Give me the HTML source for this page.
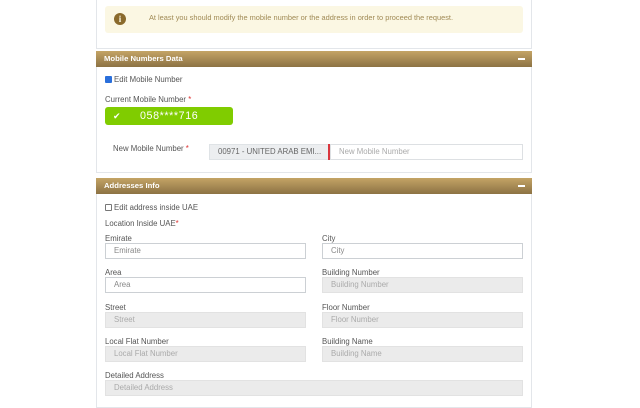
<!DOCTYPE html>
<html><head><style>
*{box-sizing:border-box;margin:0;padding:0}
body{width:640px;height:400px;background:#fff;font-family:"Liberation Sans","DejaVu Sans",sans-serif;position:relative;overflow:hidden;color:#555}
.a{position:absolute}
.card{border:1px solid #e3e6ea;background:#fff}
.hdr{height:16px;background:linear-gradient(#c4a465,#8c7244);color:#fff;font-weight:bold;font-size:7.7px;line-height:16px;padding-left:8px}
.hdr .m{position:absolute;right:7px;top:7px;width:7px;height:2px;background:#fff}
.lbl{font-size:7.8px;color:#555}
.in{height:16px;border:1px solid #ccd0d4;background:#fff;font-size:7.8px;color:#888;line-height:14px;padding-left:8px}
.dis{background:#ebebeb;border-color:#e2e2e2;color:#aaa}
.req{color:#d33}
</style></head><body>
<div class="a card" style="left:96px;top:-2px;width:436px;height:51px"></div>
<div class="a" style="left:105px;top:6px;width:418px;height:27px;background:#fbf7e3;border-radius:3px"></div>
<div class="a" style="left:114px;top:13px;width:12px;height:12px;border-radius:50%;background:#8a6a2c;color:#fbf7e3;font-size:9px;font-weight:bold;text-align:center;line-height:12px;font-family:'Liberation Serif',serif">i</div>
<div class="a" style="left:149px;top:13px;font-size:7.4px;color:#a08a55">At least you should modify the mobile number or the address in order to proceed the request.</div>

<div class="a card" style="left:96px;top:51px;width:436px;height:122px;border-top:none"></div>
<div class="a hdr" style="left:96px;top:51px;width:436px">Mobile Numbers Data<div class="m"></div></div>
<div class="a" style="left:105px;top:76px;width:7px;height:7px;background:#2a6fdb;border-radius:1px"></div>
<div class="a lbl" style="left:114px;top:75px">Edit Mobile Number</div>
<div class="a lbl" style="left:105px;top:95px">Current Mobile Number <span class="req">*</span></div>
<div class="a" style="left:105px;top:107px;width:128px;height:18px;background:#80cc00;border-radius:3px;color:#fff;font-size:10.7px;line-height:18px"><span style="position:absolute;left:8px;font-weight:bold;font-size:9px">✔</span><span style="position:absolute;left:35px;letter-spacing:0.6px">058****716</span></div>
<div class="a lbl" style="left:113px;top:144px">New Mobile Number <span class="req">*</span></div>
<div class="a in dis" style="left:209px;top:144px;width:120px;color:#666;border-color:#dfe3e6;background:#eceef0">00971 - UNITED ARAB EMI...</div>
<div class="a" style="left:328px;top:144px;width:2px;height:16px;background:#d9363e"></div>
<div class="a in" style="left:330px;top:144px;width:193px;color:#aaa;border-color:#dde0e3">New Mobile Number</div>

<div class="a card" style="left:96px;top:178px;width:436px;height:230px"></div>
<div class="a hdr" style="left:96px;top:178px;width:436px">Addresses Info<div class="m"></div></div>
<div class="a" style="left:105px;top:204px;width:7px;height:7px;border:1px solid #777;border-radius:1px"></div>
<div class="a lbl" style="left:114px;top:203px">Edit address inside UAE</div>
<div class="a lbl" style="left:105px;top:219px">Location Inside UAE<span class="req">*</span></div>

<div class="a lbl" style="left:105px;top:234px">Emirate</div>
<div class="a in" style="left:105px;top:243px;width:201px">Emirate</div>
<div class="a lbl" style="left:322px;top:234px">City</div>
<div class="a in" style="left:322px;top:243px;width:201px">City</div>

<div class="a lbl" style="left:105px;top:268px">Area</div>
<div class="a in" style="left:105px;top:277px;width:201px">Area</div>
<div class="a lbl" style="left:322px;top:268px">Building Number</div>
<div class="a in dis" style="left:322px;top:277px;width:201px">Building Number</div>

<div class="a lbl" style="left:105px;top:303px">Street</div>
<div class="a in dis" style="left:105px;top:312px;width:201px">Street</div>
<div class="a lbl" style="left:322px;top:303px">Floor Number</div>
<div class="a in dis" style="left:322px;top:312px;width:201px">Floor Number</div>

<div class="a lbl" style="left:105px;top:337px">Local Flat Number</div>
<div class="a in dis" style="left:105px;top:346px;width:201px">Local Flat Number</div>
<div class="a lbl" style="left:322px;top:337px">Building Name</div>
<div class="a in dis" style="left:322px;top:346px;width:201px">Building Name</div>

<div class="a lbl" style="left:105px;top:371px">Detailed Address</div>
<div class="a in dis" style="left:105px;top:380px;width:418px">Detailed Address</div>
</body></html>
